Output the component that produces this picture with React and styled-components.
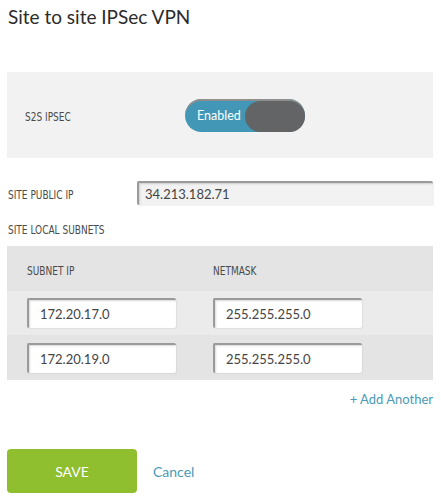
import React, { useState } from "react";
import styled, { createGlobalStyle } from "styled-components";

const GlobalStyle = createGlobalStyle`
  html, body {
    margin: 0;
    padding: 0;
    background: #ffffff;
  }
  body {
    font-family: "Lato", "Open Sans", sans-serif;
    color: #333;
  }
  * {
    box-sizing: border-box;
  }
`;

const Page = styled.div`
  width: 441px;
  padding: 6px 8px 0 7px;
`;

const Title = styled.h1`
  margin: 0 0 0 1px;
  font-size: 19px;
  font-weight: 400;
  color: #2b2b2b;
  line-height: 22px;
`;

const TogglePanel = styled.section`
  margin-top: 44px;
  height: 86px;
  background: #f2f2f2;
  display: flex;
  align-items: center;
  padding-left: 18px;
`;

const LabelBox = styled.span`
  display: block;
  line-height: 14px;
  height: 14px;
  width: ${({ $width }) => $width || "auto"};
  flex-shrink: 0;
`;

const LabelText = styled.span`
  display: inline-block;
  font-family: "DejaVu Sans", sans-serif;
  font-stretch: condensed;
  font-size: 12.5px;
  color: #4a4a4a;
  text-transform: uppercase;
  white-space: nowrap;
  transform: scaleX(0.8);
  transform-origin: left center;
`;

const Label = ({ children, $width }) => (
  <LabelBox $width={$width}>
    <LabelText>{children}</LabelText>
  </LabelBox>
);

const Toggle = styled.button`
  position: relative;
  width: 120px;
  height: 33px;
  border: none;
  border-radius: 17px;
  background: #4297b6;
  box-shadow: inset 0 2px 0 #8f8f8f;
  padding: 0 0 0 12px;
  display: flex;
  align-items: center;
  cursor: pointer;
  font-family: "Lato", sans-serif;
  font-size: 12.5px;
  color: #fff;
`;

const Knob = styled.span`
  position: absolute;
  top: 2px;
  right: 0;
  width: 60px;
  height: 31px;
  border-radius: 16px;
  background: #636466;
`;

const FieldRow = styled.div`
  display: flex;
  align-items: center;
  margin-top: 23px;
  padding-left: 1px;
`;

const TextInput = styled.input`
  height: ${({ $h }) => $h || 24}px;
  width: ${({ $w }) => $w}px;
  border: none;
  border-top: 2px solid #9a9a9a;
  border-left: 2px solid #9a9a9a;
  border-radius: 2px;
  background: ${({ $bg }) => $bg || "#fff"};
  box-shadow: inset 1px 1px 2px rgba(0, 0, 0, 0.15), 1px 1px 1px rgba(0, 0, 0, 0.05);
  padding: 0 0 0 ${({ $pl }) => $pl || 11}px;
  font-family: "Lato", sans-serif;
  font-size: 13px;
  color: #444;
  outline: none;
`;

const SectionLabel = styled.div`
  margin: 16px 0 0 1px;
`;

const Table = styled.div`
  margin-top: 11px;
  background: #e4e4e4;
`;

const Row = styled.div`
  display: grid;
  grid-template-columns: 186px 1fr;
  align-items: center;
  height: ${({ $h }) => $h}px;
  padding-left: 20px;
  background: ${({ $bg }) => $bg};
`;

const AddLink = styled.a`
  display: block;
  text-align: right;
  margin-top: 11px;
  font-size: 13px;
  color: #4a9bb8;
  text-decoration: none;
  cursor: pointer;
`;

const Actions = styled.div`
  display: flex;
  align-items: center;
  margin-top: 42px;
  gap: 16px;
`;

const SaveButton = styled.button`
  width: 130px;
  height: 44px;
  border: none;
  border-radius: 4px;
  background: #8fbe2f;
  color: #fff;
  font-family: "Lato", sans-serif;
  font-size: 14px;
  text-transform: uppercase;
  cursor: pointer;
`;

const CancelLink = styled.a`
  font-size: 14px;
  color: #4a9bb8;
  cursor: pointer;
`;

const subnets = [
  { ip: "172.20.17.0", mask: "255.255.255.0", bg: "#ebebeb" },
  { ip: "172.20.19.0", mask: "255.255.255.0", bg: "#e4e4e4" },
];

export default function App() {
  const [enabled, setEnabled] = useState(true);

  return (
    <>
      <GlobalStyle />
      <Page>
        <Title>Site to site IPSec VPN</Title>

        <TogglePanel>
          <Label $width="160px">S2S IPSEC</Label>
          <Toggle onClick={() => setEnabled(!enabled)}>
            {enabled ? "Enabled" : "Disabled"}
            <Knob />
          </Toggle>
        </TogglePanel>

        <FieldRow>
          <Label $width="129px">Site Public IP</Label>
          <TextInput $w={296} $h={24} $bg="#f2f2f2" $pl={6} defaultValue="34.213.182.71" />
        </FieldRow>

        <SectionLabel>
          <Label>Site Local Subnets</Label>
        </SectionLabel>

        <Table>
          <Row $h={45} $bg="#e4e4e4">
            <Label>Subnet IP</Label>
            <Label>Netmask</Label>
          </Row>
          {subnets.map((s, i) => (
            <Row key={i} $h={i === 0 ? 44 : 45} $bg={s.bg}>
              <TextInput $w={149} $h={30} defaultValue={s.ip} />
              <TextInput $w={149} $h={30} defaultValue={s.mask} />
            </Row>
          ))}
        </Table>

        <AddLink>+ Add Another</AddLink>

        <Actions>
          <SaveButton>Save</SaveButton>
          <CancelLink>Cancel</CancelLink>
        </Actions>
      </Page>
    </>
  );
}
